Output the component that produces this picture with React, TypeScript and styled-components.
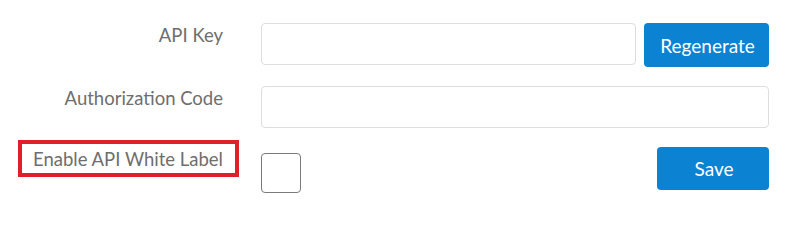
import React from "react";
import styled, { createGlobalStyle } from "styled-components";

const Global = createGlobalStyle`
  html, body { margin: 0; padding: 0; background: #fff; }
  body { font-family: Lato, "Open Sans", Arial, sans-serif; }
  * { box-sizing: border-box; }
`;

const Form = styled.form`
  display: grid;
  grid-template-columns: 223px 508px;
  column-gap: 38px;
  row-gap: 19px;
  padding-top: 23px;
  align-items: start;
`;

const Label = styled.label`
  text-align: right;
  font-size: 18.5px;
  line-height: 1.2;
  color: #6e6e6e;
  padding-top: 1px;
`;

const Highlight = styled.span`
  display: inline-block;
  border: 4px solid #e01f2b;
  padding: 4px 12px 3px 11px;
  margin: -9px -16px 0 0;
`;

const Controls = styled.div`
  display: flex;
  align-items: flex-start;
  gap: 8px;
`;

const TextInput = styled.input`
  flex: 1;
  min-width: 0;
  height: 42px;
  border: 1px solid #dedede;
  border-radius: 4px;
  padding: 6px 12px;
  font-family: inherit;
  font-size: 16px;
  outline: none;
`;

const Button = styled.button<{ $width: number; $height: number }>`
  height: ${(p) => p.$height}px;
  width: ${(p) => p.$width}px;
  padding: 0 4px 0 6px;
  margin-left: auto;
  flex: none;
  background: #0b82d2;
  color: #fff;
  border: none;
  border-radius: 4px;
  font-family: inherit;
  font-size: 19px;
  cursor: pointer;
`;

const Checkbox = styled.span`
  display: block;
  width: 40px;
  height: 40px;
  margin-top: 6px;
  border: 1.5px solid #7a7a7a;
  border-radius: 4px;
  background: #fff;
`;

export default function App() {
  return (
    <>
      <Global />
      <Form onSubmit={(e) => e.preventDefault()}>
        <Label>API Key</Label>
        <Controls>
          <TextInput type="text" />
          <Button type="button" $width={125} $height={44}>Regenerate</Button>
        </Controls>
        <Label>Authorization Code</Label>
        <Controls>
          <TextInput type="text" />
        </Controls>
        <Label>
          <Highlight>Enable API White Label</Highlight>
        </Label>
        <Controls>
          <Checkbox role="checkbox" aria-checked="false" />
          <Button type="submit" $width={112} $height={43}>Save</Button>
        </Controls>
      </Form>
    </>
  );
}
